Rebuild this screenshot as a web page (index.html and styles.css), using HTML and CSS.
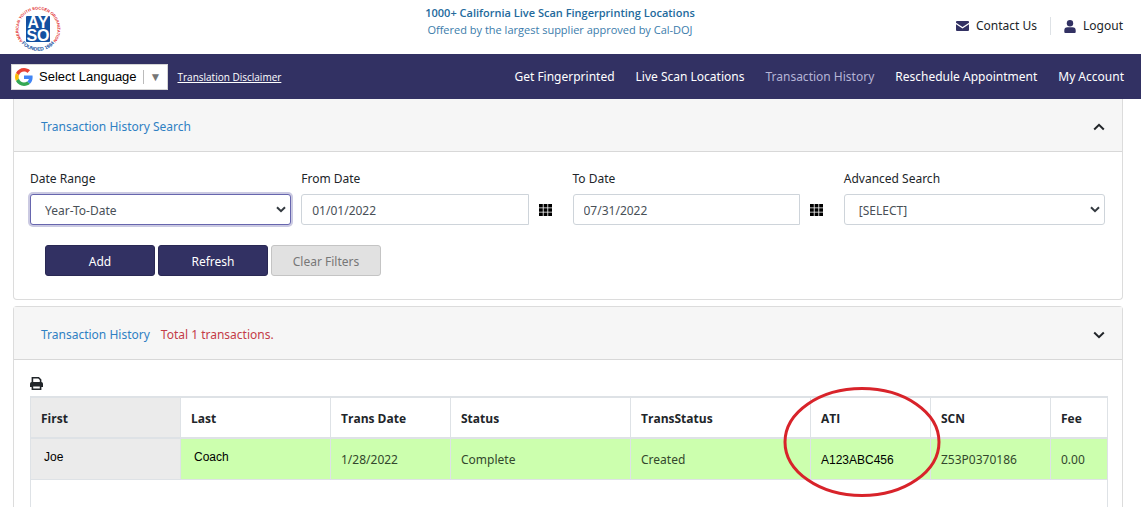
FILE: index.html
```html
<!DOCTYPE html>
<html lang="en">
<head>
    <meta charset="UTF-8">
    <meta name="viewport" content="width=device-width, initial-scale=1.0">
    <title>Transaction History</title>
    <link rel="stylesheet" href="styles.css">
</head>
<body>
    <header class="top-bar">
        <a href="#" class="logo" aria-label="AYSO home">
            <svg width="50" height="50" viewBox="0 0 50 50">
                <defs>
                    <path id="ringTop" d="M9.500 36.900 A19.500 19.500 0 1 1 40.500 36.900"/>
                    <path id="ringBottom" d="M5 33.500 A21.700 21.700 0 0 0 45 33.500"/>
                </defs>
                <rect x="13" y="12" width="24" height="26" rx="1" fill="#1450a0"/>
                <text class="logo-letters" x="25" y="24" text-anchor="middle">AY</text>
                <text class="logo-letters" x="25" y="37" text-anchor="middle">SO</text>
                <text class="logo-ring red" text-anchor="middle"><textPath href="#ringTop" startOffset="50%">AMERICAN YOUTH SOCCER ORGANIZATION</textPath></text>
                <text class="logo-ring blue" text-anchor="middle"><textPath href="#ringBottom" startOffset="50%">FOUNDED 1964</textPath></text>
            </svg>
        </a>
        <div class="tagline">
            <strong>1000+ California Live Scan Fingerprinting Locations</strong>
            <span>Offered by the largest supplier approved by Cal-DOJ</span>
        </div>
        <div class="user-links">
            <a href="#">
                <svg width="13" height="10" viewBox="0 0 13 10" fill="#323163">
                    <path d="M1 0h11a1 1 0 0 1 1 1v.8L6.5 6 0 1.800V1a1 1 0 0 1 1-1z"/>
                    <path d="M0 3.200L6.500 7.400 13 3.200V9a1 1 0 0 1-1 1H1a1 1 0 0 1-1-1z"/>
                </svg>
                Contact Us
            </a>
            <a href="#">
                <svg width="12" height="13" viewBox="0 0 12 13" fill="#323163">
                    <circle cx="6" cy="3.200" r="3.200"/>
                    <path d="M3.500 7.300h5A3.200 3.200 0 0 1 11.700 10.500V12a1 1 0 0 1-1 1H1.300a1 1 0 0 1-1-1v-1.500A3.200 3.200 0 0 1 3.500 7.300z"/>
                </svg>
                Logout
            </a>
        </div>
    </header>

    <nav class="nav-bar">
        <button type="button" class="language">
            <svg width="18" height="18" viewBox="0 0 48 48">
                <path fill="#ea4335" d="M24 9.500c3.540 0 6.710 1.220 9.210 3.600l6.850-6.850C35.900 2.380 30.470 0 24 0 14.620 0 6.510 5.380 2.560 13.220l7.980 6.190C12.430 13.720 17.740 9.500 24 9.500z"/>
                <path fill="#4285f4" d="M46.980 24.550c0-1.570-.15-3.090-.38-4.550H24v9.020h12.940c-.58 2.960-2.260 5.480-4.780 7.180l7.730 6c4.510-4.180 7.090-10.360 7.090-17.650z"/>
                <path fill="#fbbc05" d="M10.530 28.590c-.48-1.450-.76-2.990-.76-4.590s.27-3.140.76-4.590l-7.980-6.190C.92 16.460 0 20.120 0 24c0 3.880.92 7.540 2.560 10.780l7.970-6.190z"/>
                <path fill="#34a853" d="M24 48c6.480 0 11.930-2.130 15.890-5.810l-7.730-6c-2.150 1.450-4.920 2.300-8.160 2.300-6.260 0-11.570-4.220-13.470-9.910l-7.980 6.190C6.510 42.620 14.620 48 24 48z"/>
            </svg>
            <span>Select Language</span>
            <span class="language-arrow">▼</span>
        </button>
        <a href="#" class="disclaimer">Translation Disclaimer</a>
        <ul class="menu">
            <li><a href="#">Get Fingerprinted</a></li>
            <li><a href="#">Live Scan Locations</a></li>
            <li><a href="#" class="active">Transaction History</a></li>
            <li><a href="#">Reschedule Appointment</a></li>
            <li><a href="#">My Account</a></li>
        </ul>
    </nav>

    <main>
        <section class="card search-card">
            <div class="card-header">
                <a href="#">Transaction History Search</a>
                <svg class="chevron" width="12" height="8" viewBox="0 0 12 8"><path d="M1.200 6.500L6 1.800l4.800 4.700"/></svg>
            </div>
            <form class="search-form">
                <div class="fields">
                    <div class="field">
                        <label for="dateRange">Date Range</label>
                        <div class="select-wrap">
                            <select id="dateRange" class="focused">
                                <option>Year-To-Date</option>
                            </select>
                            <svg width="10" height="7" viewBox="0 0 10 7"><path d="M1 1.200l4 4 4-4"/></svg>
                        </div>
                    </div>
                    <div class="field">
                        <label for="fromDate">From Date</label>
                        <div class="date-wrap">
                            <input type="text" id="fromDate" value="01/01/2022">
                            <button type="button" class="picker" aria-label="Pick from date">
                                <svg width="13" height="12" viewBox="0 0 13 12"><path d="M0 0h3.800v3.400H0zM4.600 0h3.800v3.400H4.600zM9.200 0H13v3.400H9.200zM0 4.300h3.800v3.400H0zM4.600 4.300h3.800v3.400H4.600zM9.200 4.300H13v3.400H9.200zM0 8.600h3.800V12H0zM4.600 8.600h3.800V12H4.600zM9.200 8.600H13V12H9.200z"/></svg>
                            </button>
                        </div>
                    </div>
                    <div class="field">
                        <label for="toDate">To Date</label>
                        <div class="date-wrap">
                            <input type="text" id="toDate" value="07/31/2022">
                            <button type="button" class="picker" aria-label="Pick to date">
                                <svg width="13" height="12" viewBox="0 0 13 12"><path d="M0 0h3.800v3.400H0zM4.600 0h3.800v3.400H4.600zM9.200 0H13v3.400H9.200zM0 4.300h3.800v3.400H0zM4.600 4.300h3.800v3.400H4.600zM9.200 4.300H13v3.400H9.200zM0 8.600h3.800V12H0zM4.600 8.600h3.800V12H4.600zM9.200 8.600H13V12H9.200z"/></svg>
                            </button>
                        </div>
                    </div>
                    <div class="field">
                        <label for="advanced">Advanced Search</label>
                        <div class="select-wrap">
                            <select id="advanced">
                                <option>[SELECT]</option>
                            </select>
                            <svg width="10" height="7" viewBox="0 0 10 7"><path d="M1 1.200l4 4 4-4"/></svg>
                        </div>
                    </div>
                </div>
                <div class="actions">
                    <button type="button" class="btn">Add</button>
                    <button type="button" class="btn">Refresh</button>
                    <button type="button" class="btn" disabled>Clear Filters</button>
                </div>
            </form>
        </section>

        <section class="card results-card">
            <div class="card-header">
                <a href="#">Transaction History</a>
                <span class="total">Total 1 transactions.</span>
                <svg class="chevron" width="12" height="8" viewBox="0 0 12 8"><path d="M1.200 1.500L6 6.200l4.800-4.700"/></svg>
            </div>
            <div class="results">
                <button type="button" class="print" aria-label="Print">
                    <svg width="13" height="13" viewBox="0 0 13 13">
                        <path fill="#212529" d="M1.800 5h9.400A1.800 1.800 0 0 1 13 6.800V10H0V6.800A1.800 1.800 0 0 1 1.800 5z"/>
                        <path fill="#fff" stroke="#212529" stroke-width="1.600" d="M2.400 5.800V.8h6.200l2 2v3z"/>
                        <path fill="#fff" stroke="#212529" stroke-width="1.600" d="M2.400 8.600h8.200v3.600H2.400z"/>
                    </svg>
                </button>
                <div class="table-wrap">
                    <table>
                        <colgroup>
                            <col class="col-name">
                            <col class="col-name">
                            <col class="col-short">
                            <col class="col-status">
                            <col class="col-status">
                            <col class="col-short">
                            <col class="col-short">
                            <col>
                        </colgroup>
                        <thead>
                            <tr>
                                <th>First</th>
                                <th>Last</th>
                                <th>Trans Date</th>
                                <th>Status</th>
                                <th>TransStatus</th>
                                <th class="marked">ATI
                                    <svg class="marker" width="158" height="110" viewBox="0 0 158 110"><ellipse cx="79" cy="55" rx="77" ry="53.500"/></svg>
                                </th>
                                <th>SCN</th>
                                <th>Fee</th>
                            </tr>
                        </thead>
                        <tbody>
                            <tr>
                                <td class="plain name">Joe</td>
                                <td class="plain name">Coach</td>
                                <td>1/28/2022</td>
                                <td>Complete</td>
                                <td>Created</td>
                                <td class="plain">A123ABC456</td>
                                <td>Z53P0370186</td>
                                <td>0.00</td>
                            </tr>
                        </tbody>
                    </table>
                </div>
            </div>
        </section>
    </main>
</body>
</html>
```
FILE: styles.css
```css
* {
    box-sizing: border-box;
}
body {
    margin: 0;
    min-height: 100vh;
    display: flex;
    flex-direction: column;
    font-family: "Noto Sans", "Open Sans", sans-serif;
    font-size: 12px;
    line-height: 18px;
    color: #212529;
    background: #fff;
}
a {
    color: #337ab7;
    text-decoration: none;
}
button, input, select {
    font-family: inherit;
    font-size: 12px;
}
svg {
    display: block;
    flex: none;
}

/* header */
.top-bar {
    height: 54px;
    display: grid;
    grid-template-columns: 1fr auto 1fr;
    padding: 0 18px 0 13px;
}
.logo {
    padding-top: 4px;
}
.logo-letters {
    font: bold 16px "Liberation Sans", sans-serif;
    fill: #fff;
}
.logo-ring {
    font: bold 4px "Liberation Sans", sans-serif;
}
.red {
    fill: #e0201c;
}
.blue {
    font-size: 5px;
    fill: #1450a0;
}
.tagline {
    margin-right: 16px;
    padding-top: 4px;
    display: flex;
    flex-direction: column;
    align-items: center;
    font-family: "Open Sans", sans-serif;
    font-size: 11px;
    line-height: 17px;
    color: #3b7cab;
}
.tagline strong {
    color: #236a9c;
    font-weight: 600;
}
.user-links {
    display: flex;
    justify-content: flex-end;
    align-items: flex-start;
    padding-top: 17px;
}
.user-links a {
    display: flex;
    align-items: center;
    gap: 7px;
    color: #212529;
}
.user-links a + a {
    margin-left: 13px;
    padding-left: 13px;
    border-left: 1px solid #dee2e6;
}

/* navigation */
.nav-bar {
    height: 45px;
    display: flex;
    align-items: center;
    padding: 0 17px 0 11px;
    background: #323163;
}
.nav-bar a {
    color: #fff;
}
.language {
    height: 26px;
    display: flex;
    align-items: center;
    padding: 0 6px 0 3px;
    gap: 6px;
    border: 1px solid #d5d5d5;
    background: #fff;
    color: #000;
    font: 13px "Liberation Sans", Arial, sans-serif;
}
.language-arrow {
    padding-left: 6px;
    border-left: 1px solid #bbb;
    color: #767676;
    font-size: 12px;
}
.disclaimer {
    margin-left: 9px;
    font-family: "Open Sans", sans-serif;
    font-size: 10px;
    text-decoration: underline;
}
.menu {
    display: flex;
    gap: 21px;
    margin: 0 0 0 auto;
    padding: 1px 0 0;
    list-style: none;
}
.menu .active {
    color: #b5b4d6;
}

/* cards */
main {
    flex: 1;
    display: flex;
    flex-direction: column;
    gap: 6px;
    padding: 0 18px 0 13px;
}
.card {
    border: 1px solid #dcdcdc;
    border-radius: 4px;
}
.card-header {
    height: 53px;
    display: flex;
    align-items: center;
    gap: 11px;
    padding: 3px 17px 0 27px;
    border-bottom: 1px solid #d8d8d8;
    background: #f6f6f6;
}
.card-header a {
    color: #2f80c3;
}
.total {
    color: #c43c48;
}
.chevron {
    margin-left: auto;
    fill: none;
    stroke: #212529;
    stroke-width: 2;
}
.search-card {
    border-top: 0;
    border-radius: 0 0 4px 4px;
}
.results-card {
    flex: 1;
    display: flex;
    flex-direction: column;
    border-bottom: 0;
    border-radius: 4px 4px 0 0;
}

/* search form */
.search-form {
    padding: 18px 17px 23px 16px;
}
.fields {
    display: grid;
    grid-template-columns: repeat(4, 1fr);
    gap: 10px;
}
.field label {
    display: block;
    margin-bottom: 6px;
}
.field input, .field select {
    width: 100%;
    height: 31px;
    padding: 1px 14px 0;
    border: 1px solid #ced4da;
    border-radius: 3px;
    background: #fff;
    color: #495057;
    appearance: none;
    outline: none;
}
.field input {
    padding: 1px 10px 0;
    border-radius: 3px 0 0 3px;
}
.field .focused {
    border-color: #6766ae;
    box-shadow: 0 0 0 2px #cbcae2;
}
.select-wrap {
    position: relative;
}
.select-wrap svg {
    position: absolute;
    right: 5px;
    top: 12px;
    fill: none;
    stroke: #343a40;
    stroke-width: 2;
    pointer-events: none;
}
.date-wrap {
    display: flex;
}
.picker {
    width: 34px;
    flex: none;
    display: flex;
    align-items: center;
    justify-content: center;
    padding: 0;
    border: 0;
    background: none;
}
.actions {
    display: flex;
    gap: 3px;
    margin: 20px 0 0 15px;
}
.btn {
    width: 110px;
    height: 31px;
    padding: 2px 0 0;
    border: 1px solid #292853;
    border-radius: 3px;
    background: #323163;
    color: #fff;
}
.btn:disabled {
    border-color: #c4c4c4;
    background: #e1e1e1;
    color: #777;
}

/* results table */
.results {
    flex: 1;
    display: flex;
    flex-direction: column;
    padding: 17px 14px 0 16px;
}
.print {
    align-self: flex-start;
    margin-bottom: 6px;
    padding: 0;
    border: 0;
    background: none;
}
.table-wrap {
    flex: 1;
    border: 1px solid #dee2e6;
    border-width: 1px 1px 0;
}
table {
    width: 100%;
    table-layout: fixed;
    border-collapse: separate;
    border-spacing: 0;
}
.col-name {
    width: 150px;
}
.col-short {
    width: 120px;
}
.col-status {
    width: 180px;
}
th, td {
    height: 41px;
    padding: 2px 10px 0;
    text-align: left;
    white-space: nowrap;
    border-right: 1px solid #dee2e6;
    border-bottom: 1px solid #dee2e6;
}
th {
    height: 42px;
    border-top: 1px solid #dee2e6;
    border-bottom-width: 2px;
    font-family: "Open Sans", sans-serif;
}
th:last-child, td:last-child {
    border-right: 0;
}
td {
    background: #ccffae;
    color: #33472c;
}
th:first-child, td:first-child {
    background: #ebebeb;
}
.plain {
    color: #000;
    font-family: "Liberation Sans", Arial, sans-serif;
}
.name {
    padding: 0 13px 5px;
}
.marked {
    position: relative;
}
/* red ring drawn over the ATI column */
.marker {
    position: absolute;
    z-index: 1;
    left: -28px;
    top: -11px;
    fill: none;
    stroke: #d8232a;
    stroke-width: 3;
    pointer-events: none;
}
```
